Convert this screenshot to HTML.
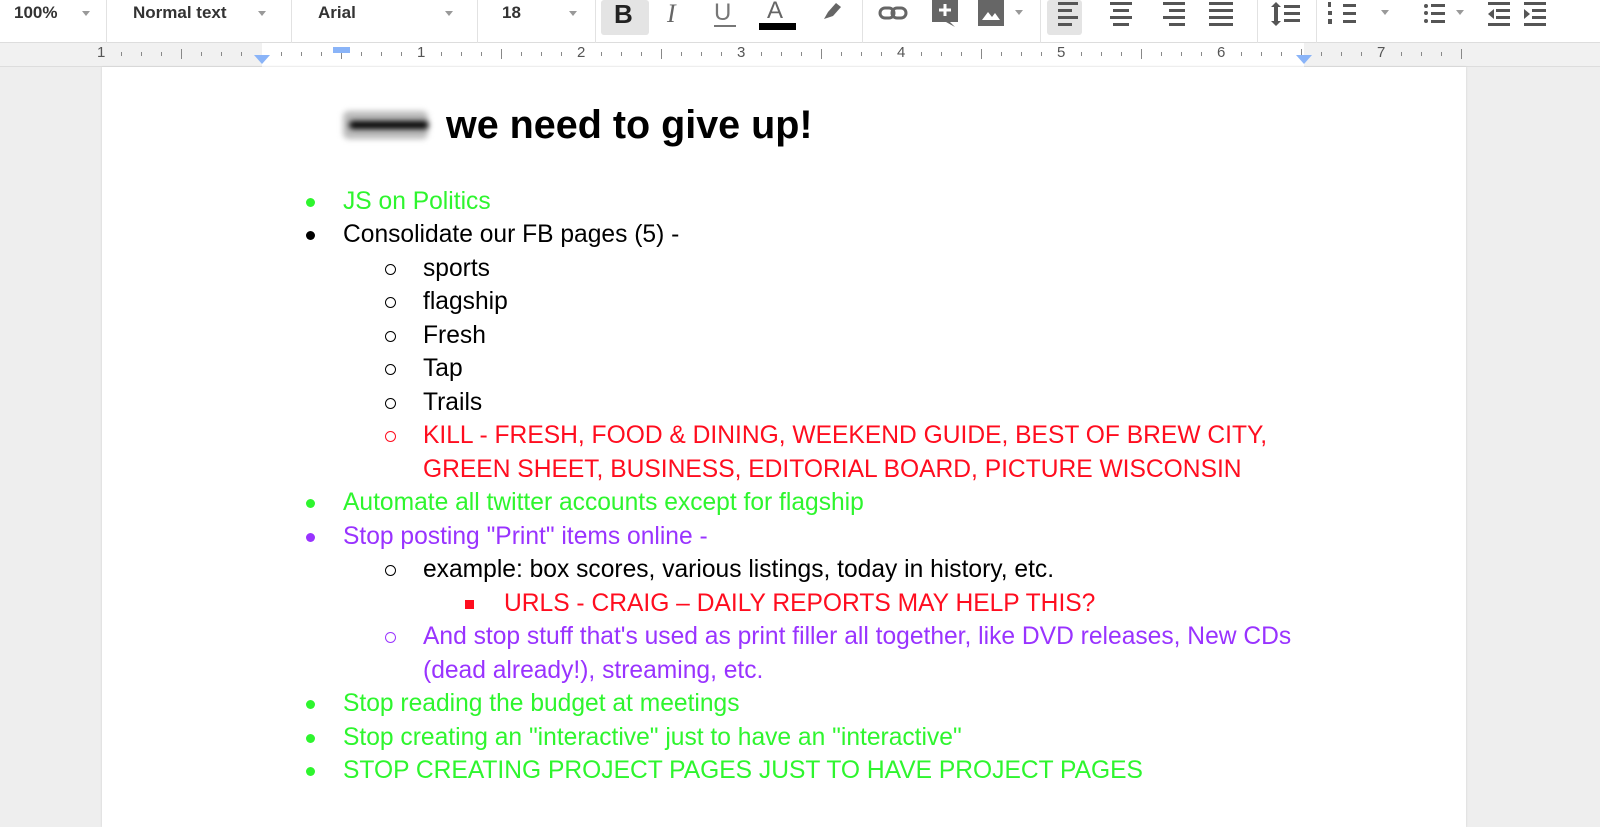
<!DOCTYPE html>
<html><head><meta charset="utf-8"><style>
*{margin:0;padding:0;box-sizing:border-box}
body{width:1600px;height:805px;overflow:hidden;background:#eeeeee;font-family:"Liberation Sans",Arial,sans-serif;position:relative}
#tb{position:absolute;left:0;top:0;width:1600px;height:43px;background:#fff;border-bottom:1px solid #ddd}
.tt{position:absolute;top:3px;font-size:17px;color:#333;font-weight:bold}
.dd{position:absolute;top:11px;width:0;height:0;border-left:4px solid transparent;border-right:4px solid transparent;border-top:5px solid #999}
.sep{position:absolute;top:0;width:1px;height:43px;background:#e2e2e2}
#ruler{position:absolute;left:0;top:43px;width:1600px;height:24px;background:#f1f1f1;border-bottom:1px solid #ddd}
#rw{position:absolute;left:262px;top:0;width:1042px;height:24px;background:#fff}
.rn{position:absolute;top:1px;font-size:15px;color:#555}
.tk{position:absolute;top:9px;width:1px;height:4px;background:#888}
.tl{position:absolute;top:6px;width:1px;height:10px;background:#888}
#page{position:absolute;left:102px;top:67px;width:1364px;height:760px;background:#fff;box-shadow:0 0 2px #ccc}
.ln{position:absolute;font-size:24.6px;line-height:33.5px;white-space:nowrap}
.dot{position:absolute;width:9px;height:9px;border-radius:50%}
.circ{position:absolute;width:11px;height:11px;border-radius:50%;border:1.5px solid}
</style></head><body>
<div id="tb">
<div class="tt" style="left:14px">100%</div><div class="dd" style="left:82px"></div>
<div class="sep" style="left:106px"></div>
<div class="tt" style="left:133px">Normal text</div><div class="dd" style="left:258px"></div>
<div class="sep" style="left:291px"></div>
<div class="tt" style="left:318px">Arial</div><div class="dd" style="left:445px"></div>
<div class="sep" style="left:477px"></div>
<div class="tt" style="left:502px">18</div><div class="dd" style="left:569px"></div>
<div class="sep" style="left:595px"></div>
<div style="position:absolute;left:601px;top:0;width:48px;height:35px;background:#e4e4e4;border-radius:3px"></div>
<div style="position:absolute;left:614px;top:-1px;font-size:26px;font-weight:bold;color:#222">B</div>
<div style="position:absolute;left:667px;top:-1px;font-size:26px;font-style:italic;color:#666;font-family:'Liberation Serif',serif">I</div>
<div style="position:absolute;left:714px;top:-1px;font-size:24px;color:#777">U</div>
<div style="position:absolute;left:714px;top:25px;width:22px;height:2px;background:#777"></div>
<div style="position:absolute;left:767px;top:-3px;font-size:24px;color:#666">A</div>
<div style="position:absolute;left:759px;top:23px;width:37px;height:7px;background:#000"></div>
<svg style="position:absolute;left:820px;top:0" width="24" height="22"><path d="M4 19 L8 12 L16 3 L21 7 L13 16 Z" fill="#666"/></svg>
<div class="sep" style="left:862px"></div>
<svg style="position:absolute;left:878px;top:4px" width="32" height="18"><rect x="2" y="4" width="14" height="10" rx="5" fill="none" stroke="#666" stroke-width="3"/><rect x="14" y="4" width="14" height="10" rx="5" fill="none" stroke="#666" stroke-width="3"/></svg>
<svg style="position:absolute;left:930px;top:0" width="30" height="28"><path d="M2 0 H28 V22 L20 22 L25 27 L16 22 H2 Z" fill="#666"/><path d="M15 4 V16 M9 10 H21" stroke="#fff" stroke-width="3"/></svg>
<svg style="position:absolute;left:977px;top:0" width="28" height="26"><rect x="1" y="0" width="26" height="26" fill="#666"/><path d="M5 20 L11 12 L15 17 L18 13 L23 20 Z" fill="#fff"/></svg>
<div class="dd" style="left:1015px;top:10px"></div>
<div class="sep" style="left:1040px"></div>
<div style="position:absolute;left:1047px;top:0;width:35px;height:35px;background:#e4e4e4;border-radius:3px"></div>
<svg style="position:absolute;left:1058px;top:2px" width="500" height="26" fill="#555">
<rect x="0" y="0" width="20" height="3"/><rect x="0" y="7" width="14" height="3"/><rect x="0" y="14" width="20" height="3"/><rect x="0" y="21" width="14" height="3"/>
<rect x="52" y="0" width="22" height="3"/><rect x="55" y="7" width="16" height="3"/><rect x="52" y="14" width="22" height="3"/><rect x="55" y="21" width="16" height="3"/>
<rect x="105" y="0" width="22" height="3"/><rect x="111" y="7" width="16" height="3"/><rect x="105" y="14" width="22" height="3"/><rect x="111" y="21" width="16" height="3"/>
<rect x="151" y="0" width="24" height="3"/><rect x="151" y="7" width="24" height="3"/><rect x="151" y="14" width="24" height="3"/><rect x="151" y="21" width="24" height="3"/>
<path d="M218 0 L223 5 H220 V19 H223 L218 24 L213 19 H216 V5 H213 Z"/><rect x="226" y="3" width="16" height="3"/><rect x="226" y="10" width="16" height="3"/><rect x="226" y="17" width="16" height="3"/>
<rect x="285" y="2" width="13" height="3"/><rect x="285" y="10" width="13" height="3"/><rect x="285" y="18" width="13" height="3"/>
<rect x="270" y="0" width="3" height="5"/><rect x="270" y="9" width="4" height="4"/><rect x="270" y="17" width="4" height="5"/>
<circle cx="368" cy="4" r="2"/><circle cx="368" cy="11" r="2"/><circle cx="368" cy="19" r="2"/><rect x="373" y="2" width="14" height="3"/><rect x="373" y="10" width="14" height="3"/><rect x="373" y="18" width="14" height="3"/>
<rect x="430" y="0" width="22" height="3"/><rect x="438" y="7" width="14" height="3"/><rect x="438" y="14" width="14" height="3"/><rect x="430" y="21" width="22" height="3"/><path d="M436 7 V17 L430 12 Z"/>
<rect x="466" y="0" width="22" height="3"/><rect x="474" y="7" width="14" height="3"/><rect x="474" y="14" width="14" height="3"/><rect x="466" y="21" width="22" height="3"/><path d="M466 7 V17 L472 12 Z"/>
</svg>
<div class="dd" style="left:1381px;top:10px"></div><div class="dd" style="left:1456px;top:10px"></div>
<div class="sep" style="left:1257px"></div><div class="sep" style="left:1316px"></div>
</div>
<div id="ruler"><div id="rw"></div>
<div id="rt"></div>
</div>
<div id="page"></div>
<div style="position:absolute;left:343px;top:106px;width:87px;height:36px;filter:blur(3px)"><div style="position:absolute;left:0;top:5px;width:85px;height:28px;background:#bbb;border-radius:6px"></div><div style="position:absolute;left:6px;top:15px;width:80px;height:8px;background:#000;border-radius:4px"></div></div>
<div style="position:absolute;left:446px;top:102px;font-size:39.5px;font-weight:bold;color:#000;line-height:46px">we need to give up!</div>
<div id="body"></div>
<script>
var L=[[1,"JS on Politics","g"],[1,"Consolidate our FB pages (5) -","k"],[2,"sports","k"],[2,"flagship","k"],[2,"Fresh","k"],[2,"Tap","k"],[2,"Trails","k"],[2,"KILL - FRESH, FOOD &amp; DINING, WEEKEND GUIDE, BEST OF BREW CITY,","r"],[0,"GREEN SHEET, BUSINESS, EDITORIAL BOARD, PICTURE WISCONSIN","r"],[1,"Automate all twitter accounts except for flagship","g"],[1,"Stop posting \"Print\" items online -","p"],[2,"example: box scores, various listings, today in history, etc.","k"],[3,"URLS - CRAIG – DAILY REPORTS MAY HELP THIS?","r"],[2,"And stop stuff that's used as print filler all together, like DVD releases, New CDs","p"],[0,"(dead already!), streaming, etc.","p"],[1,"Stop reading the budget at meetings","g"],[1,"Stop creating an \"interactive\" just to have an \"interactive\"","g"],[1,"STOP CREATING PROJECT PAGES JUST TO HAVE PROJECT PAGES","g"]];
var col={g:"#2ef52e",p:"#9933ff",r:"#ff0d1f",k:"#000"},b='';
L.forEach(function(l,i){var cy=202+i*33.5,top=cy-17.5,lv=l[0],c=col[l[2]];
var tx=lv==1?343:lv==3?504:423;
b+='<div class="ln" style="left:'+tx+'px;top:'+top+'px;color:'+c+'">'+l[1]+'</div>';
if(lv==1)b+='<div class="dot" style="left:306px;top:'+(cy-4.5)+'px;background:'+c+'"></div>';
if(lv==2)b+='<div class="circ" style="left:385px;top:'+(cy-5.5)+'px;border-color:'+c+'"></div>';
if(lv==3)b+='<div style="position:absolute;left:465px;top:'+(cy-4.5)+'px;width:9px;height:9px;background:'+c+'"></div>';
});
document.getElementById('body').innerHTML=b;
var s='';
for(var k=0;k<=68;k++){var x=101+k*20;
if(k%8==0){ if(k==8){} else { var n=k==0?1:k/8-1; s+='<div class="rn" style="left:'+(x-4)+'px">'+n+'</div>';}}
else if(k%4==0)s+='<div class="tl" style="left:'+x+'px"></div>';else s+='<div class="tk" style="left:'+x+'px"></div>';}
s+='<div style="position:absolute;left:254px;top:12px;border-left:8px solid transparent;border-right:8px solid transparent;border-top:9px solid #8ab4f8"></div>';
s+='<div style="position:absolute;left:1296px;top:12px;border-left:8px solid transparent;border-right:8px solid transparent;border-top:9px solid #8ab4f8"></div>';
s+='<div style="position:absolute;left:333px;top:4px;width:17px;height:6px;background:#8ab4f8"></div>';
document.getElementById('rt').innerHTML=s;
</script>
</body></html>
